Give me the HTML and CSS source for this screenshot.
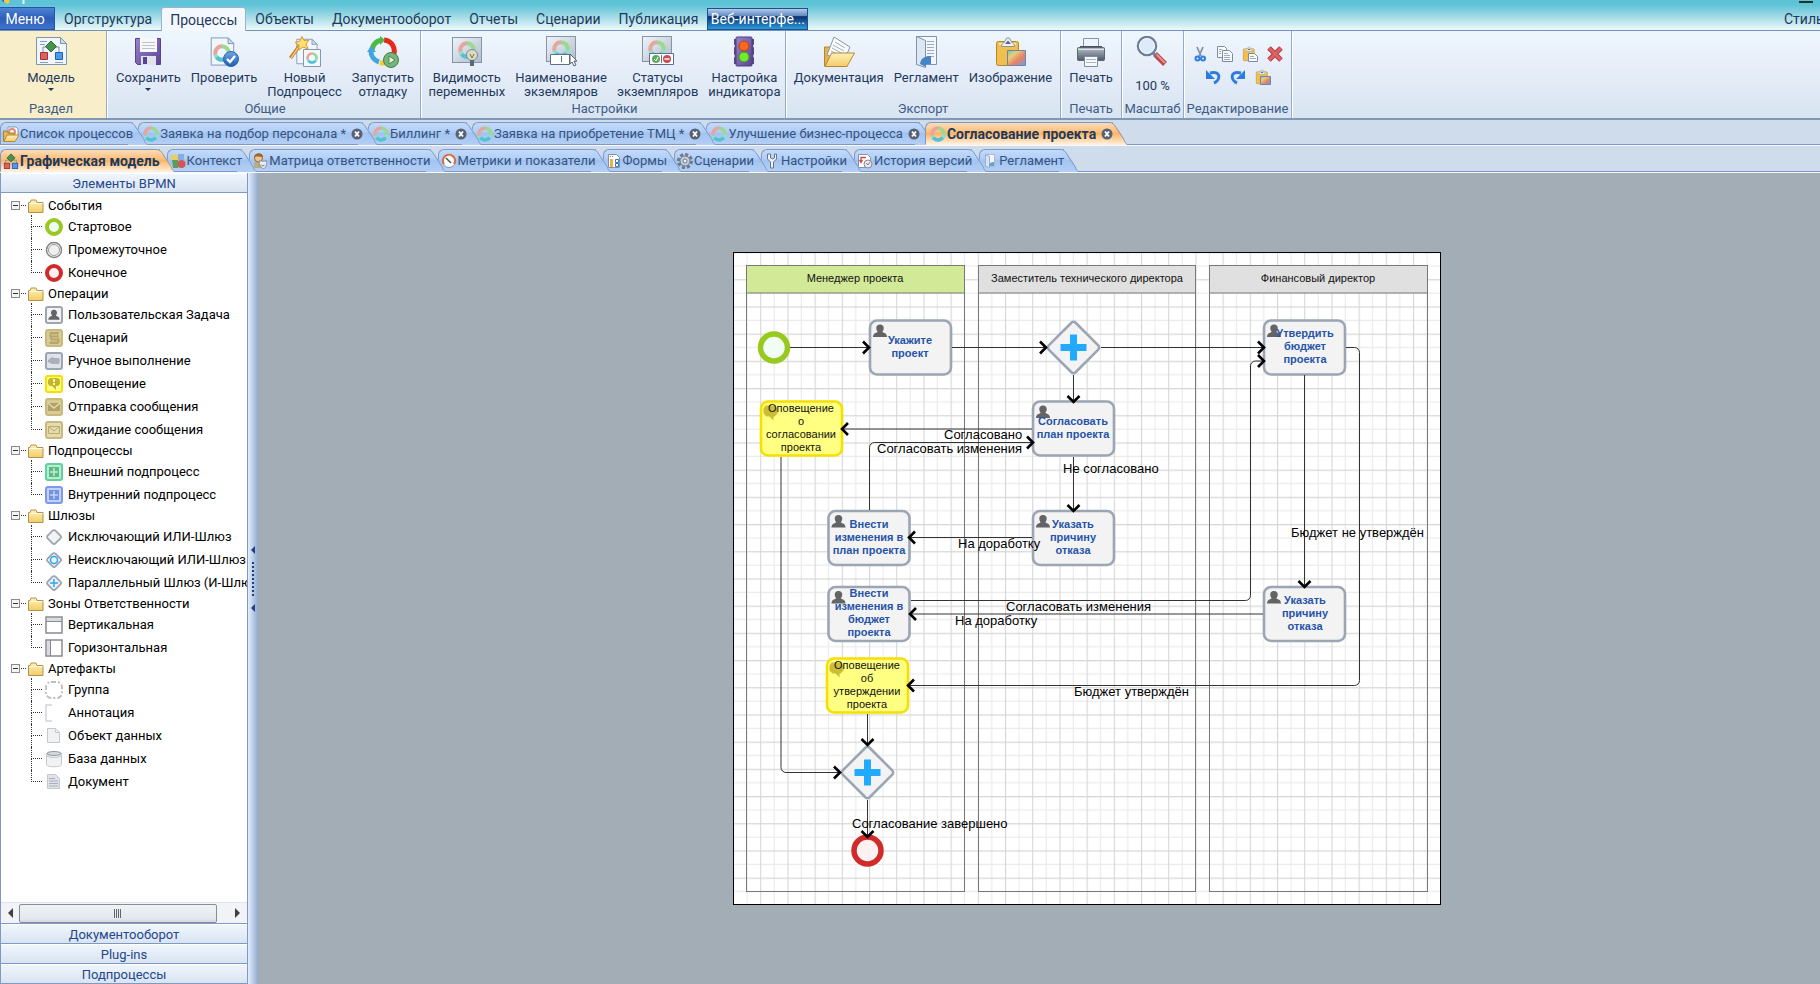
FILE: index.html
```html
<!DOCTYPE html>
<html lang="ru">
<head>
    <meta charset="UTF-8">
    <meta name="viewport" content="width=device-width, initial-scale=1.0">
    <title>Согласование проекта</title>
    <link rel="stylesheet" href="styles.css">
</head>
<body>

<!-- shared shapes -->
<svg class="defs" aria-hidden="true">
    <defs>
        <linearGradient id="tabBlue" x1="0" y1="0" x2="0" y2="1">
            <stop offset="0" stop-color="#c3dafb"/><stop offset=".4" stop-color="#b2cff7"/>
            <stop offset=".5" stop-color="#a3c3f0"/><stop offset="1" stop-color="#b4cff5"/>
        </linearGradient>
        <linearGradient id="tabOrange" x1="0" y1="0" x2="0" y2="1">
            <stop offset="0" stop-color="#fcdcb8"/><stop offset=".4" stop-color="#fbc180"/>
            <stop offset=".5" stop-color="#fbb565"/><stop offset="1" stop-color="#fff0de"/>
        </linearGradient>
        <linearGradient id="folderFill" x1="0" y1="0" x2="0" y2="1">
            <stop offset="0" stop-color="#fff0b8"/><stop offset="1" stop-color="#f2cd67"/>
        </linearGradient>
        <linearGradient id="boardFill" x1="0" y1="0" x2="1" y2="1">
            <stop offset="0" stop-color="#f0f4f8"/><stop offset="1" stop-color="#afbccb"/>
        </linearGradient>
        <linearGradient id="rainbow" x1="0" y1="0" x2="1" y2="1">
            <stop offset="0" stop-color="#78c796"/><stop offset=".3" stop-color="#e5cf7d"/>
            <stop offset=".6" stop-color="#e98263"/><stop offset="1" stop-color="#6da1dc"/>
        </linearGradient>
        <linearGradient id="purple" x1="0" y1="0" x2="1" y2="1">
            <stop offset="0" stop-color="#9a83cb"/><stop offset="1" stop-color="#5b4495"/>
        </linearGradient>
        <linearGradient id="blueBall" x1="0" y1="0" x2="0" y2="1">
            <stop offset="0" stop-color="#6aa6e6"/><stop offset="1" stop-color="#1f5eb0"/>
        </linearGradient>
        <linearGradient id="printerFill" x1="0" y1="0" x2="0" y2="1">
            <stop offset="0" stop-color="#b7bfca"/><stop offset="1" stop-color="#4e5969"/>
        </linearGradient>

        <symbol id="edge" viewBox="0 0 20 23">
            <path stroke="none" d="M0 0h1c4 0 6 2 8 5l8 13c1 3 2 5 3 5H0z"/>
            <path fill="none" stroke="#7f99c4" d="M0 .5h1c4 0 5 2 7 5l8 12c1 3 2 5 4 5"/>
        </symbol>
        <symbol id="ring" viewBox="0 0 16 16">
            <g fill="none" stroke-width="3.6">
                <path stroke="#8fdcd0" d="M14 7.500A6 6 0 0 1 2.200 9.500"/>
                <path stroke="#56c0d6" d="M12.700 11.700A6 6 0 0 1 3.300 11.700"/>
                <path stroke="#e5a6a0" d="M2.200 9.500A6 6 0 0 1 8 2"/>
                <path stroke="#9bd98f" d="M8 2A6 6 0 0 1 14 8.500"/>
            </g>
        </symbol>
        <symbol id="close" viewBox="0 0 12 12">
            <circle cx="6" cy="6" r="5.500" fill="#566174"/>
            <path d="M4 3.500l4 5M8 3.500l-4 5" stroke="#fff" stroke-width="1.800"/>
        </symbol>
        <symbol id="folder" viewBox="0 0 16 14">
            <path d="M1 3.500h1l1-2.500h5l1 2.500h6v10H.5v-10z" fill="url(#folderFill)" stroke="#b3924f"/>
            <path d="M1.500 4.500h13" stroke="#fffbe4"/>
        </symbol>
        <symbol id="docSheet" viewBox="0 0 32 32">
            <path d="M4.500 1.500h18l6 6v23h-24z" fill="#f2f6fb" stroke="#7b95b8"/>
            <path d="M22.500 1.500v6h6z" fill="#cfdcec" stroke="#7b95b8"/>
        </symbol>
        <symbol id="board" viewBox="0 0 32 32">
            <rect x="1.500" y="1.500" width="29" height="25" fill="url(#boardFill)" stroke="#8494a9"/>
            <use href="#ring" x="7" y="5" width="18" height="18"/>
        </symbol>
        <symbol id="clipboard" viewBox="0 0 32 32">
            <rect x="2.500" y="5.500" width="22" height="24" rx="2" fill="#f0bf4e" stroke="#b4852a"/>
            <path d="M5 8h17" stroke="#fbe2a0" stroke-width="2"/>
            <path d="M7.500 10.500c0-3 2-3 3-4.500l2-4h3l2 4c1 1.500 3 1.500 3 4.500z" fill="#eef1f5" stroke="#8a94a3"/>
            <path d="M11 8h6l-3-3.500z" fill="#59697f"/>
        </symbol>
        <symbol id="modelShapes" viewBox="0 0 18 18">
            <path d="M9 5v4M3 12V8h12v4" fill="none" stroke="#7592b5"/>
            <path d="M9 1l4.500 4.500L9 10 4.500 5.500z" fill="#48934c" stroke="#2c6b32"/>
            <rect x="1.500" y="11.500" width="6" height="6" fill="#dc6360" stroke="#a33536"/>
            <rect x="10.500" y="11.500" width="6" height="6" fill="#4b9af0" stroke="#2060b0"/>
        </symbol>
        <symbol id="man" viewBox="0 0 16 14">
            <path d="M8 .5c3 0 4 2 4 4 0 1.500-1 3-1.500 4 2 1 5 1.500 5 5.500H.5C.5 10 3.500 9.500 5.500 8.500 5 7.500 4 6 4 4.500c0-2 1-4 4-4z" fill="#636466"/>
        </symbol>
        <symbol id="rombus" viewBox="0 0 18 18">
            <rect x="3.500" y="3.500" width="11" height="11" rx="2" transform="rotate(45 9 9)" fill="#f2f2f2" stroke="#9aa4b2" stroke-width="1.800"/>
        </symbol>
    </defs>
</svg>

<header class="menu-bar">
    <svg class="title-rest" width="30" height="5" viewBox="0 0 30 5"><path d="M3 0h6l1 2-3 2-2-2H3z" fill="#f7c83c"/><path d="M2 0h2v2H3z" fill="#2b66b8"/><path d="M23.500 0v4" stroke="#e8f6f9" stroke-width="2"/></svg>
    <span class="minimize"></span>
    <button class="menu-main">Меню</button>
    <nav class="menu-tabs">
        <button class="menu-tab">Оргструктура</button>
        <button class="menu-tab active">Процессы</button>
        <button class="menu-tab">Объекты</button>
        <button class="menu-tab">Документооборот</button>
        <button class="menu-tab">Отчеты</button>
        <button class="menu-tab">Сценарии</button>
        <button class="menu-tab">Публикация</button>
    </nav>
    <button class="menu-web">Веб-интерфе...</button>
    <button class="menu-style">Стиль</button>
</header>

<section class="ribbon">
    <div class="group group-section">
        <div class="group-body">
            <button class="tool">
                <svg class="icon" viewBox="0 0 32 32"><path d="M1.500 1.500h24l6 6v21h-30z" fill="#f2f6fb" stroke="#7b95b8"/><path d="M25.500 1.500v6h6z" fill="#cfdcec" stroke="#7b95b8"/><path d="M5 5.500h7M5 8.500h5M5 26.500h8M20 26.500h8" stroke="#7fa0c8"/><path d="M8 16v-5h16v5" fill="none" stroke="#7592b5"/><path d="M16 5l5.500 5.500L16 16l-5.500-5.500z" fill="#48934c" stroke="#2c6b32"/><path d="M5.500 16.500h7v7h-7z" fill="#dc6360" stroke="#a33536"/><path d="M20.500 16.500h7v7h-7z" fill="#4b9af0" stroke="#2060b0"/></svg>
                Модель
                <span class="drop"></span>
            </button>
        </div>
        <div class="caption">Раздел</div>
    </div>
    <div class="group group-common">
        <div class="group-body">
            <button class="tool">
                <svg class="icon" viewBox="0 0 32 32"><path d="M3.500 2.500h25v26h-23l-2-2z" fill="url(#purple)" stroke="#58438c"/><path d="M8 2h17v14H8z" fill="#f7f8fa"/><path d="M10 6.500h13M10 9.500h13M10 12.500h13" stroke="#bcc3cc"/><path d="M9 20h15v9H9z" fill="#dfe3ea"/><path d="M11 21h4v7h-4z" fill="#58438c"/></svg>
                Сохранить
                <span class="drop"></span>
            </button>
            <button class="tool">
                <svg class="icon" viewBox="0 0 32 32"><use href="#docSheet" x="-1" width="30" height="31"/><use href="#ring" x="5" y="8" width="18" height="18"/><circle cx="23" cy="23" r="7.500" fill="url(#blueBall)" stroke="#2c66ae"/><path d="M19 23l3 3 5-6" fill="none" stroke="#fff" stroke-width="2.400"/></svg>
                Проверить
            </button>
            <button class="tool">
                <svg class="icon" viewBox="0 0 32 32"><use href="#docSheet" x="4" y="0" width="27" height="31"/><path d="M14.500 13.500h17v17h-17z" fill="#f4f7fb" stroke="#8398b3"/><use href="#ring" x="17" y="16" width="12" height="12"/><path d="M11 9L1.500 22" stroke="#b8751f" stroke-width="3.500"/><path d="M11 9L2 22" stroke="#f3c980" stroke-width="1.500"/><path d="M13 .5l2 4 5-.5-3 4 2 5-5-2-4 3V9L6 6.500l5-1.500z" fill="#ffe070" stroke="#dc992b"/></svg>
                Новый<br>Подпроцесс
            </button>
            <button class="tool">
                <svg class="icon" viewBox="0 0 32 32"><g fill="none" stroke-width="5"><path d="M5 14A11 11 0 0 1 15 4" stroke="#4fb848"/><path d="M17 4A11 11 0 0 1 26 20" stroke="#e62a1c"/><path d="M4 15a11 11 0 0 0 8 11" stroke="#42a5dc"/><path d="M13 27h7" stroke="#f3cc2d"/></g><path d="M13 0l5 4-5 5z" fill="#4fb848"/><path d="M0 16l4-6 5 6z" fill="#42a5dc"/><circle cx="24" cy="24" r="7.500" fill="#78b57b" stroke="#3f8148"/><path d="M22 20l6 4-6 4z" fill="#e6f2e5" stroke="#4e8b54"/></svg>
                Запустить<br>отладку
            </button>
        </div>
        <div class="caption">Общие</div>
    </div>
    <div class="group group-settings">
        <div class="group-body">
            <button class="tool">
                <svg class="icon" viewBox="0 0 32 32"><use href="#board"/><circle cx="21" cy="19" r="5.500" fill="#d9dcc0" stroke="#7e8899"/><path d="M19 18l2 4 2-4" fill="none" stroke="#6d7556"/><path d="M19 24h4v6h-4z" fill="#5b677a"/></svg>
                Видимость<br>переменных
            </button>
            <button class="tool">
                <svg class="icon" viewBox="0 0 32 32"><use href="#board" y="-1"/><path d="M5.500 18.500h19v10h-19z" fill="#fff" stroke="#5f6f86"/><path d="M16.500 20v6" stroke="#5f6f86"/><path d="M25 18v10l2-2 2 4 2-1-2-4h3z" fill="#fff" stroke="#56647a"/></svg>
                Наименование<br>экземляров
            </button>
            <button class="tool">
                <svg class="icon" viewBox="0 0 32 32"><use href="#board" y="-1" x="-1"/><path d="M7.500 17.500h24v11h-24z" fill="#fff" stroke="#5f6f86"/><path d="M19.500 19v8" stroke="#5f6f86"/><circle cx="14" cy="23" r="4" fill="#5fa765"/><path d="M12 23l2 2 2-4" fill="none" stroke="#fff"/><circle cx="25" cy="23" r="4" fill="#cc4a52"/><path d="M22.500 23h5" stroke="#fff" stroke-width="1.500"/></svg>
                Статусы<br>экземпляров
            </button>
            <button class="tool">
                <svg class="icon" viewBox="0 0 32 32"><path d="M6 3h20v5l-1 2 1 2v6l-1 2 1 2v6H6v-6l1-2-1-2v-6l1-2-1-2z" fill="#5c4590"/><rect x="8" y="1" width="16" height="29" rx="1" fill="url(#purple)" stroke="#51407e"/><circle cx="16" cy="10" r="5" fill="#f9681d" stroke="#b9430b"/><circle cx="16" cy="21" r="5" fill="#73ea2d" stroke="#419d1a"/></svg>
                Настройка<br>индикатора
            </button>
        </div>
        <div class="caption">Настройки</div>
    </div>
    <div class="group group-export">
        <div class="group-body">
            <button class="tool">
                <svg class="icon" viewBox="0 0 32 32"><path d="M1.500 30V11h8v3h15v16z" fill="#e4b450" stroke="#b18431"/><path d="M4 19L11 1l16 10-6 14z" fill="#fafbfc" stroke="#8a97a9"/><path d="M12 6l10 6M10 9l11 6M9 12l11 6M8 15l8 4" stroke="#a3afbe"/><path d="M2 30.500L8.500 17h23L24 30.500z" fill="url(#folderFill)" stroke="#b48a35"/></svg>
                Документация
            </button>
            <button class="tool">
                <svg class="icon" viewBox="0 0 32 32"><path d="M6.500.5h20v28h-20z" fill="#f3f6fa" stroke="#7d93b1"/><path d="M17 5.500h7M17 8.500h7M17 11.500h7M17 14.500h7M17 17.500h7M17 20.500h7" stroke="#9baabd"/><path d="M6.500.5l9 4v27l-9-3z" fill="#dde6f1" stroke="#7d93b1"/><path d="M10 28c1-7 6-8 11-8v8h-5v3z" fill="#4784c6"/></svg>
                Регламент
            </button>
            <button class="tool">
                <svg class="icon" viewBox="0 0 32 32"><use href="#clipboard" x="-1"/><path d="M12.500 14.500h18v15h-18z" fill="url(#rainbow)" stroke="#6e86a5"/></svg>
                Изображение
            </button>
        </div>
        <div class="caption">Экспорт</div>
    </div>
    <div class="group group-print">
        <div class="group-body">
            <button class="tool">
                <svg class="icon" viewBox="0 0 32 32"><path d="M8.500 2.500h15v9h-15z" fill="#eef4fb" stroke="#8295ad"/><path d="M5 10h22v4H5z" fill="#475161"/><rect x="2.500" y="11.500" width="27" height="13" rx="1" fill="url(#printerFill)" stroke="#5a6575"/><path d="M3 13.500h26" stroke="#e1e5eb"/><path d="M4 14h1v2H4z" fill="#6fd23c"/><path d="M9.500 20.500h13v10h-13z" fill="#f6f8fb" stroke="#7c8da5"/><path d="M11 23.500h10M11 26.500h10" stroke="#a9b5c5"/></svg>
                Печать
            </button>
        </div>
        <div class="caption">Печать</div>
    </div>
    <div class="group group-zoom">
        <div class="group-body">
            <button class="tool">
                <svg class="icon" viewBox="0 0 32 32"><path d="M19 18l10 10" stroke="#b44a4b" stroke-width="5.500"/><path d="M20 18l9 9" stroke="#e99291" stroke-width="2"/><path d="M16 16l4 4" stroke="#717e90" stroke-width="3"/><circle cx="11" cy="10" r="9" fill="#dcebfa" stroke="#6f7f95" stroke-width="2.500"/><circle cx="11" cy="10" r="7.500" fill="none" stroke="#f7fafd"/></svg>
                <span class="zoom-value">100 %</span>
            </button>
        </div>
        <div class="caption">Масштаб</div>
    </div>
    <div class="group group-edit">
        <div class="edit-tools">
            <button class="mini" aria-label="Вырезать"><svg viewBox="0 0 16 16"><path d="M5 1l4 9M11 1l-4 9" stroke="#8592a6" stroke-width="1.800"/><g fill="none" stroke="#2e7fdf" stroke-width="2"><circle cx="5.500" cy="12.500" r="2"/><circle cx="11" cy="12.500" r="2"/></g></svg></button>
            <button class="mini" aria-label="Копировать"><svg viewBox="0 0 16 16"><g fill="#f7f9fb" stroke="#7b8da6"><path d="M.5.5h7l2 2v9h-9z"/><path d="M5.500 4.500h7l3 3v8h-10z"/></g><path d="M2 3.500h3M2 5.500h2M2 7.500h2M7 7.500h4M7 9.500h6M7 11.500h6M7 13.500h6" stroke="#9fadbf"/></svg></button>
            <button class="mini" aria-label="Вставить"><svg viewBox="0 0 16 16"><use href="#clipboard" width="16" height="16"/><path d="M6.500 7.500h6l3 3v5h-9z" fill="#f7f9fb" stroke="#7b8da6"/><path d="M8 10.500h4M8 12.500h6" stroke="#9fadbf"/></svg></button>
            <button class="mini" aria-label="Удалить"><svg viewBox="0 0 16 16"><path d="M2 2l12 12M14 2L2 14" stroke="#b33b3e" stroke-width="5"/><path d="M2 2l12 12M14 2L2 14" stroke="#dd6263" stroke-width="3"/></svg></button>
            <button class="mini" aria-label="Отменить"><svg viewBox="0 0 16 16"><path d="M5 4c11-3 11 7 4 10" fill="none" stroke="#2c7ce0" stroke-width="3"/><path d="M1 1v9h9z" fill="#2c7ce0"/></svg></button>
            <button class="mini" aria-label="Вернуть"><svg viewBox="0 0 16 16"><path d="M11 4C0 1 0 11 7 14" fill="none" stroke="#2c7ce0" stroke-width="3"/><path d="M15 1v9H6z" fill="#2c7ce0"/></svg></button>
            <button class="mini" aria-label="Вставить изображение"><svg viewBox="0 0 16 16"><use href="#clipboard" width="16" height="16"/><path d="M5.500 7.500h10v8h-10z" fill="url(#rainbow)" stroke="#6e86a5"/></svg></button>
        </div>
        <div class="caption">Редактирование</div>
    </div>
</section>

<nav class="tabs">
    <div class="tab">
        <svg class="tab-icon" viewBox="0 0 16 16"><path d="M5 1h8l2 2v8H5z" fill="#fff" stroke="#8b9ab0"/><circle cx="9" cy="6" r="3" fill="none" stroke="#e08a7a" stroke-width="2"/><path d="M.5 15V5H4l1 2h6v8z" fill="#e5b754" stroke="#a97e31"/><path d="M1 15.500L4 9h12l-4 6.500z" fill="url(#folderFill)" stroke="#b48a35"/></svg>
        <a href="#">Список процессов</a>
        <svg class="tab-edge"><use href="#edge"/></svg>
    </div>
    <div class="tab process">
        <svg class="tab-icon"><use href="#ring"/></svg>
        <a href="#">Заявка на подбор персонала *</a>
        <button class="tab-close" aria-label="Закрыть"><svg><use href="#close"/></svg></button>
        <svg class="tab-edge"><use href="#edge"/></svg>
    </div>
    <div class="tab process">
        <svg class="tab-icon"><use href="#ring"/></svg>
        <a href="#">Биллинг *</a>
        <button class="tab-close" aria-label="Закрыть"><svg><use href="#close"/></svg></button>
        <svg class="tab-edge"><use href="#edge"/></svg>
    </div>
    <div class="tab process">
        <svg class="tab-icon"><use href="#ring"/></svg>
        <a href="#">Заявка на приобретение ТМЦ *</a>
        <button class="tab-close" aria-label="Закрыть"><svg><use href="#close"/></svg></button>
        <svg class="tab-edge"><use href="#edge"/></svg>
    </div>
    <div class="tab process">
        <svg class="tab-icon"><use href="#ring"/></svg>
        <a href="#">Улучшение бизнес-процесса</a>
        <button class="tab-close" aria-label="Закрыть"><svg><use href="#close"/></svg></button>
        <svg class="tab-edge"><use href="#edge"/></svg>
    </div>
    <div class="tab process active">
        <svg class="tab-icon"><use href="#ring"/></svg>
        <a href="#">Согласование проекта</a>
        <button class="tab-close" aria-label="Закрыть"><svg><use href="#close"/></svg></button>
        <svg class="tab-edge"><use href="#edge"/></svg>
    </div>
</nav>

<nav class="tabs views">
    <div class="tab active">
        <svg class="tab-icon"><use href="#modelShapes"/></svg>
        <a href="#">Графическая модель</a>
        <svg class="tab-edge"><use href="#edge"/></svg>
    </div>
    <div class="tab">
        <svg class="tab-icon" viewBox="0 0 16 16"><path d="M1 2h3l1-1 1 1h3v5H1z" fill="#e9cf63"/><path d="M8 1h6v6H8z" fill="#86aede"/><path d="M2 7h6v3l1 1-1 4H3z" fill="#5e9c5c"/><circle cx="11.500" cy="11" r="4" fill="#d2575a"/></svg>
        <a href="#">Контекст</a>
        <svg class="tab-edge"><use href="#edge"/></svg>
    </div>
    <div class="tab">
        <svg class="tab-icon" viewBox="0 0 16 16"><path d="M2 15V9h9v6z" fill="#b8ad82"/><circle cx="6.500" cy="5" r="4" fill="#f2c690" stroke="#96682e"/><path d="M2 4c1-5 9-5 9 0-3 0-5-1-9 0z" fill="#96682e"/><path d="M7.500 7.500c3 1 5 1 7 0 1 4-1 8-3 8s-5-4-4-8z" fill="#e9eef4" stroke="#8391a4"/><path d="M9.500 12c1 1 2 1 3 0" stroke="#5d6c80" fill="none"/></svg>
        <a href="#">Матрица ответственности</a>
        <svg class="tab-edge"><use href="#edge"/></svg>
    </div>
    <div class="tab">
        <svg class="tab-icon" viewBox="0 0 16 16"><circle cx="8" cy="8" r="6.500" fill="#fbfbfb" stroke="#8c95a3"/><path d="M3 11A6 6 0 1 1 13 11" fill="none" stroke="#dc6a3a" stroke-width="2"/><path d="M5 5l5 5" stroke="#4b5563" stroke-width="1.500"/></svg>
        <a href="#">Метрики и показатели</a>
        <svg class="tab-edge"><use href="#edge"/></svg>
    </div>
    <div class="tab">
        <svg class="tab-icon" viewBox="0 0 16 16"><path d="M2.500 1.500h8l3 3v10h-11z" fill="#fff" stroke="#8091a8"/><path d="M4 3.500h4" stroke="#d4605c" stroke-dasharray="1 1"/><path d="M4 6h3v8H4z" fill="#f0b23c"/><path d="M9.500 6.500h3v3h-3zM9.500 10.500h3v3h-3z" fill="#fff" stroke="#2f79cf"/></svg>
        <a href="#">Формы</a>
        <svg class="tab-edge"><use href="#edge"/></svg>
    </div>
    <div class="tab">
        <svg class="tab-icon" viewBox="0 0 16 16"><circle cx="8" cy="8" r="6.500" fill="none" stroke="#6c7a8e" stroke-width="3" stroke-dasharray="3 2"/><circle cx="8" cy="8" r="5" fill="#c5cdd8" stroke="#6c7a8e"/><circle cx="8" cy="8" r="2" fill="#eef2f7" stroke="#6c7a8e"/></svg>
        <a href="#">Сценарии</a>
        <svg class="tab-edge"><use href="#edge"/></svg>
    </div>
    <div class="tab">
        <svg class="tab-icon" viewBox="0 0 16 16"><path d="M3.500 1v5l3 3v6h3V9l3-3V1h-2v4l-2 1-2-1V1z" fill="#edf1f6" stroke="#66768e"/></svg>
        <a href="#">Настройки</a>
        <svg class="tab-edge"><use href="#edge"/></svg>
    </div>
    <div class="tab">
        <svg class="tab-icon" viewBox="0 0 16 16"><path d="M1.500 1.500h9l3 3v10h-12z" fill="#fff" stroke="#8091a8"/><path d="M4 9V4.500h5M2.500 7L4 9.500 5.500 7" fill="none" stroke="#d34949" stroke-width="1.300"/><circle cx="11" cy="11" r="4" fill="#e6ebf1" stroke="#7f8c9e"/><path d="M9 10l2 2 2-3" fill="none" stroke="#c46a64"/></svg>
        <a href="#">История версий</a>
        <svg class="tab-edge"><use href="#edge"/></svg>
    </div>
    <div class="tab">
        <svg class="tab-icon" viewBox="0 0 16 16"><path d="M3.500 1.500h9v12h-9z" fill="#f4f7fa" stroke="#a9bad0"/><path d="M3.500 1.500l4 2v11l-4-1z" fill="#d9e4f0" stroke="#9db1ca"/><path d="M7 13c0-3 2-4 5-4v4z" fill="#6ea0d8"/></svg>
        <a href="#">Регламент</a>
        <svg class="tab-edge"><use href="#edge"/></svg>
    </div>
</nav>

<main class="work">
    <aside class="sidebar">
        <button class="panel-head">Элементы BPMN</button>
        <div class="tree">
            <div class="branch">
                <div class="branch-head"><span class="toggle"></span><svg class="folder"><use href="#folder"/></svg>События</div>
                <ul>
                    <li><svg viewBox="0 0 18 18"><circle cx="9" cy="9" r="7" fill="#f0fbf2" stroke="#97c91e" stroke-width="4"/></svg>Стартовое</li>
                    <li><svg viewBox="0 0 18 18"><circle cx="9" cy="9" r="7.500" fill="#fff" stroke="#838383" stroke-width="1.500"/><circle cx="9" cy="9" r="5.500" fill="#f0f0f0" stroke="#9a9a9a"/></svg>Промежуточное</li>
                    <li><svg viewBox="0 0 18 18"><circle cx="9" cy="9" r="7" fill="#fdf0f0" stroke="#cf2b2b" stroke-width="4"/></svg>Конечное</li>
                </ul>
            </div>
            <div class="branch">
                <div class="branch-head"><span class="toggle"></span><svg class="folder"><use href="#folder"/></svg>Операции</div>
                <ul>
                    <li><svg viewBox="0 0 18 18"><rect x="1" y="1" width="16" height="16" rx="2" fill="#f3f3f3" stroke="#9ba5b4" stroke-width="2"/><use href="#man" x="3" y="3" width="12" height="11"/></svg>Пользовательская Задача</li>
                    <li><svg viewBox="0 0 18 18"><rect x="1" y="1" width="16" height="16" rx="2" fill="#d8cb95" stroke="#c8b97c" stroke-width="2"/><path d="M5 3h9l-1 3 2 6-2 3H4l2-4-2-4z" fill="#b5a76c"/><path d="M6 6h6M7 9h6M6 12h6" stroke="#d8cb95"/></svg>Сценарий</li>
                    <li><svg viewBox="0 0 18 18"><rect x="1" y="1" width="16" height="16" rx="2" fill="#dfe2e8" stroke="#9ba5b4" stroke-width="2"/><path d="M3 8l4-3 2 1h5l1 2-1 4H7l-4-2z" fill="#aab1bc"/></svg>Ручное выполнение</li>
                    <li><svg viewBox="0 0 18 18"><rect x="1" y="1" width="16" height="16" rx="2" fill="#ffff82" stroke="#f5e000" stroke-width="2"/><path d="M5 3h8l2 2v4l-2 2h-2v4l-4-4H5L3 9V5z" fill="#c2b435"/><path d="M9 4v3M9 8v2" stroke="#ffff82" stroke-width="2"/></svg>Оповещение</li>
                    <li><svg viewBox="0 0 18 18"><rect x="1" y="1" width="16" height="16" rx="2" fill="#d8cb95" stroke="#c8b97c" stroke-width="2"/><path d="M3 5h12v8H3z" fill="#b1a267"/><path d="M3 5l6 5 6-5" fill="none" stroke="#e5daad" stroke-width="1.500"/></svg>Отправка сообщения</li>
                    <li><svg viewBox="0 0 18 18"><rect x="1" y="1" width="16" height="16" rx="2" fill="#e5dbad" stroke="#c8b97c" stroke-width="2"/><path d="M3.500 5.500h11v7h-11zM4 6l5 4 5-4" fill="none" stroke="#b9aa70"/></svg>Ожидание сообщения</li>
                </ul>
            </div>
            <div class="branch">
                <div class="branch-head"><span class="toggle"></span><svg class="folder"><use href="#folder"/></svg>Подпроцессы</div>
                <ul>
                    <li><svg viewBox="0 0 18 18"><rect x="1" y="1" width="16" height="16" rx="2" fill="#b7efcd" stroke="#62cfa0" stroke-width="2"/><path d="M4 4h10v10H4z" fill="#5fb98b"/><path d="M9 5v8M5 9h8" stroke="#b7efcd" stroke-width="1.500"/></svg>Внешний подпроцесс</li>
                    <li><svg viewBox="0 0 18 18"><rect x="1" y="1" width="16" height="16" rx="2" fill="#c3d2fb" stroke="#7b9aec" stroke-width="2"/><path d="M4 4h10v10H4z" fill="#7292e0"/><path d="M9 5v8M5 9h8" stroke="#c3d2fb" stroke-width="1.500"/></svg>Внутренний подпроцесс</li>
                </ul>
            </div>
            <div class="branch">
                <div class="branch-head"><span class="toggle"></span><svg class="folder"><use href="#folder"/></svg>Шлюзы</div>
                <ul>
                    <li><svg viewBox="0 0 18 18"><use href="#rombus"/></svg>Исключающий ИЛИ-Шлюз</li>
                    <li><svg viewBox="0 0 18 18"><use href="#rombus"/><circle cx="9" cy="9" r="3.500" fill="none" stroke="#22aaff" stroke-width="1.500"/></svg>Неисключающий ИЛИ-Шлюз</li>
                    <li><svg viewBox="0 0 18 18"><use href="#rombus"/><path d="M9 5v8M5 9h8" stroke="#22aaff" stroke-width="1.500"/></svg>Параллельный Шлюз (И-Шлюз)</li>
                </ul>
            </div>
            <div class="branch">
                <div class="branch-head"><span class="toggle"></span><svg class="folder"><use href="#folder"/></svg>Зоны Ответственности</div>
                <ul>
                    <li><svg viewBox="0 0 18 18"><path d="M1 1h16v16H1z" fill="#fff" stroke="#8a8b90" stroke-width="1.500"/><path d="M2 2h14v3H2z" fill="#d8dbe3"/><path d="M1 5.500h16" stroke="#8a8b90"/></svg>Вертикальная</li>
                    <li><svg viewBox="0 0 18 18"><path d="M1 1h16v16H1z" fill="#fff" stroke="#8a8b90" stroke-width="1.500"/><path d="M2 2h3v14H2z" fill="#d8dbe3"/><path d="M5.500 1v16" stroke="#8a8b90"/></svg>Горизонтальная</li>
                </ul>
            </div>
            <div class="branch">
                <div class="branch-head"><span class="toggle"></span><svg class="folder"><use href="#folder"/></svg>Артефакты</div>
                <ul>
                    <li><svg viewBox="0 0 18 18"><rect x="1" y="1" width="16" height="16" rx="5" fill="none" stroke="#bdbdbd" stroke-width="1.800" stroke-dasharray="5 2 2 2"/></svg>Группа</li>
                    <li><svg viewBox="0 0 18 18"><path d="M7 1H1v16h6" fill="none" stroke="#cfd3da" stroke-width="1.500"/></svg>Аннотация</li>
                    <li><svg viewBox="0 0 18 18"><path d="M2.500 1.500h8l4 4v10h-12z" fill="#f1f2f4" stroke="#c3c8d0"/><path d="M10.500 1.500v4h4" fill="none" stroke="#c3c8d0"/></svg>Объект данных</li>
                    <li><svg viewBox="0 0 18 18"><path d="M1.500 3.500h15v11c0 3-15 3-15 0z" fill="#f1f2f4" stroke="#c3c8d0"/><ellipse cx="9" cy="3.500" rx="7" ry="2" fill="#d6d9de" stroke="#8f959e"/><path d="M2 6c3 2 11 2 14 0" fill="none" stroke="#c3c8d0"/></svg>База данных</li>
                    <li><svg viewBox="0 0 18 18"><path d="M2.500 1.500h8l4 4v10h-12z" fill="#dfe2e7" stroke="#c3c8d0"/><path d="M4 5.500h6M4 8h9M4 10.500h9M4 13h9" stroke="#a9afb9"/></svg>Документ</li>
                </ul>
            </div>
        </div>
        <div class="scrollbar">
            <span class="arrow arrow-left"></span>
            <span class="thumb"></span>
            <span class="arrow arrow-right"></span>
        </div>
        <button class="panel-head">Документооборот</button>
        <button class="panel-head">Plug-ins</button>
        <button class="panel-head">Подпроцессы</button>
    </aside>

    <div class="splitter">
        <span class="split-arrow"></span>
        <span class="split-dots"></span>
        <span class="split-arrow"></span>
    </div>

    <div class="canvas">
        <svg class="diagram" width="708" height="653" viewBox="0 0 708 653">
            <defs>
                <pattern id="grid" x="0" y="0" width="27.200" height="27.200" patternUnits="userSpaceOnUse">
                    <path d="M14 0v27.200M0 14h27.200" stroke="#ebebeb" stroke-width="1.200"/>
                    <path d="M.5 0v27.200M0 .5h27.200" stroke="#d6d6d6" stroke-width="1.200"/>
                </pattern>
                <marker id="head" viewBox="-9 -8 11 16" refX="0" refY="0" markerWidth="11" markerHeight="16" markerUnits="userSpaceOnUse" orient="auto">
                    <path d="M-7 -6L-1 0L-7 6" fill="none" stroke="#000" stroke-width="2.600"/>
                </marker>
                <g id="task">
                    <rect x="-40.500" y="-27" width="81" height="54" rx="7" fill="#f3f3f3" stroke="#9ba5b4" stroke-width="2.600"/>
                    <use href="#man" x="-38" y="-24" width="15" height="14"/>
                </g>
                <g id="notify">
                    <rect x="-40.500" y="-27" width="81" height="54" rx="7" fill="#ffff82" stroke="#f5e000" stroke-width="2.600"/>
                    <path d="M-36-23h9l3 3v5l-3 3h-1v4l-4-4h-3l-3-3v-5z" fill="#cbbd35"/>
                </g>
                <g id="gateway">
                    <rect x="-19" y="-19" width="38" height="38" rx="3" transform="rotate(45)" fill="#f3f3f3" stroke="#9ba5b4" stroke-width="2.600"/>
                    <path d="M0-13v26M-13 0h26" stroke="#22aaff" stroke-width="7"/>
                </g>
            </defs>

            <rect width="708" height="653" fill="#fff"/>
            <rect width="708" height="653" fill="url(#grid)"/>

            <!-- lanes -->
            <g class="lanes">
                <rect x="13.500" y="13.500" width="218" height="27.500" fill="#d2e998"/>
                <rect x="245.500" y="13.500" width="217" height="27.500" fill="#e0e0e0"/>
                <rect x="476.500" y="13.500" width="218" height="27.500" fill="#e0e0e0"/>
                <rect x="13.500" y="13.500" width="218" height="626" fill="none"/>
                <rect x="245.500" y="13.500" width="217" height="626" fill="none"/>
                <rect x="476.500" y="13.500" width="218" height="626" fill="none"/>
            </g>
            <g class="lane-title">
                <text x="122" y="30">Менеджер проекта</text>
                <text x="354" y="30">Заместитель технического директора</text>
                <text x="585" y="30">Финансовый директор</text>
            </g>

            <!-- events, tasks and gateways -->
            <circle cx="41" cy="95.500" r="13.500" fill="#f1fdf4" stroke="#97c91e" stroke-width="5.500"/>
            <circle cx="134.500" cy="598.500" r="13.500" fill="#fdf1f1" stroke="#cf2b2b" stroke-width="5.500"/>
            <use href="#task" x="177.500" y="95.500"/>
            <use href="#task" x="571.500" y="95.500"/>
            <use href="#task" x="340.500" y="176.500"/>
            <use href="#task" x="340.500" y="286"/>
            <use href="#task" x="136" y="286"/>
            <use href="#task" x="136" y="362"/>
            <use href="#task" x="571.500" y="362"/>
            <use href="#notify" x="68.500" y="176.500"/>
            <use href="#notify" x="134.500" y="433.500"/>
            <use href="#gateway" x="340.500" y="95.500"/>
            <use href="#gateway" x="134.500" y="520.500"/>

            <!-- flows -->
            <g class="flow">
                <path d="M57 95.500H137"/>
                <path d="M219 95.500H314"/>
                <path d="M368 95.500H532"/>
                <path d="M340.500 123V151"/>
                <path d="M299 177H108"/>
                <path d="M136.500 258V195.500a5 5 0 0 1 5-5H301"/>
                <path d="M340.500 205V260"/>
                <path d="M299 285.500H175"/>
                <path d="M571.500 123V336"/>
                <path d="M613 95.500h8.500a5 5 0 0 1 5 5V428.500a5 5 0 0 1-5 5H174"/>
                <path d="M530 362H176"/>
                <path d="M178 348.500H512.500a5 5 0 0 0 5-5V114a5 5 0 0 1 5-5H532"/>
                <path d="M48 205V515.500a5 5 0 0 0 5 5H108"/>
                <path d="M134.500 462V494"/>
                <path d="M134.500 548V586"/>
            </g>

            <g class="task-text">
                <text x="177" y="92">Укажите<tspan x="177" dy="13">проект</tspan></text>
                <text x="572" y="85">Утвердить<tspan x="572" dy="13">бюджет</tspan><tspan x="572" dy="13">проекта</tspan></text>
                <text x="340" y="173">Согласовать<tspan x="340" dy="13">план проекта</tspan></text>
                <text x="340" y="276">Указать<tspan x="340" dy="13">причину</tspan><tspan x="340" dy="13">отказа</tspan></text>
                <text x="136" y="276">Внести<tspan x="136" dy="13">изменения в</tspan><tspan x="136" dy="13">план проекта</tspan></text>
                <text x="136" y="345">Внести<tspan x="136" dy="13">изменения в</tspan><tspan x="136" dy="13">бюджет</tspan><tspan x="136" dy="13">проекта</tspan></text>
                <text x="572" y="352">Указать<tspan x="572" dy="13">причину</tspan><tspan x="572" dy="13">отказа</tspan></text>
            </g>
            <g class="lane-title">
                <text x="68" y="160">Оповещение<tspan x="68" dy="13">о</tspan><tspan x="68" dy="13">согласовании</tspan><tspan x="68" dy="13">проекта</tspan></text>
                <text x="134" y="417">Оповещение<tspan x="134" dy="13">об</tspan><tspan x="134" dy="13">утверждении</tspan><tspan x="134" dy="13">проекта</tspan></text>
            </g>
            <g class="flow-text">
                <text x="211" y="187">Согласовано</text>
                <text x="144" y="201">Согласовать изменения</text>
                <text x="330" y="221">Не согласовано</text>
                <text x="225" y="296">На доработку</text>
                <text x="558" y="285">Бюджет не утверждён</text>
                <text x="273" y="359">Согласовать изменения</text>
                <text x="222" y="373">На доработку</text>
                <text x="341" y="444">Бюджет утверждён</text>
                <text x="119" y="576">Согласование завершено</text>
            </g>
            <rect x=".5" y=".5" width="707" height="652" fill="none" stroke="#000"/>
        </svg>
    </div>
</main>

</body>
</html>
```

FILE: styles.css
```css
* {
    box-sizing: border-box;
}
body {
    margin: 0;
    height: 100vh;
    display: flex;
    flex-direction: column;
    overflow: hidden;
    font-family: Roboto, "Liberation Sans", sans-serif;
    font-size: 13px;
    color: #1e395b;
    background-color: #cfdcec;
}
button {
    font: inherit;
    color: inherit;
    border: none;
    background: none;
    padding: 0;
    white-space: nowrap;
    cursor: pointer;
}
a {
    color: inherit;
    text-decoration: none;
}
.defs {
    position: absolute;
    width: 0;
    height: 0;
}

/* top menu */
.menu-bar {
    position: relative;
    display: flex;
    align-items: flex-end;
    flex: none;
    height: 31px;
    font-size: 14px;
    border-bottom: 1px solid #6f93bb;
    background: linear-gradient(#5fc3d7 15%, #8fd4e1 45%, #eef8fa);
}
.title-rest {
    position: absolute;
    left: 0;
    top: 0;
}
.minimize {
    position: absolute;
    right: 7px;
    top: 1px;
    width: 14px;
    height: 2px;
    background: #26302c;
}
.menu-main {
    width: 55px;
    height: 23px;
    padding-right: 4px;
    color: #fff;
    border: 1px solid #2453a4;
    border-left: none;
    background: linear-gradient(#4c83d2, #2c5dba 50%, #3f74cb);
}
.menu-tabs {
    display: flex;
}
.menu-tab {
    height: 23px;
    padding: 0 8px;
    border: 1px solid transparent;
    border-bottom: none;
}
.menu-tab.active {
    height: 24px;
    margin-bottom: -1px;
    border-color: #9ab4d0;
    border-radius: 3px 3px 0 0;
    background: #f3f8fe;
}
.menu-web {
    height: 22px;
    width: 101px;
    color: #fff;
    border: 1px solid #1c4f92;
    background: linear-gradient(#b5cbe7, #5d88c0 35%, #0a2f6d 38%, #2c9bdc);
}
.menu-style {
    width: 36px;
    height: 23px;
    margin-left: auto;
    overflow: hidden;
    text-align: left;
}

/* ribbon */
.ribbon {
    display: flex;
    flex: none;
    height: 89px;
    border-bottom: 2px solid #7f98b5;
    background: linear-gradient(#eef6fd, #e7eef9 40%, #d8e4f1);
}
.group {
    display: flex;
    flex-direction: column;
    flex: none;
    border-right: 1px solid #93abc9;
    box-shadow: 1px 0 0 #fff;
}
.group-section {
    width: 107px;
    padding-right: 4px;
    background: #f8efca;
}
.group-common {
    width: 314px;
    padding-left: 3px;
}
.group-settings {
    width: 365px;
    padding-left: 3px;
}
.group-export {
    width: 275px;
}
.group-print {
    width: 61px;
}
.group-zoom {
    width: 62px;
}
.group-edit {
    width: 108px;
}
.group-body {
    flex: 1;
    display: flex;
    justify-content: center;
    align-items: flex-start;
    padding-top: 5px;
}
.tool {
    padding: 0 5px;
    line-height: 14px;
}
.icon {
    display: block;
    width: 32px;
    height: 32px;
    margin: 0 auto 3px;
}
.drop {
    display: block;
    width: 0;
    margin: 3px auto 0;
    border: 3px solid transparent;
    border-top-color: #1e395b;
    border-bottom: none;
}
.zoom-value {
    display: block;
    padding-top: 8px;
}
.caption {
    height: 17px;
    line-height: 16px;
    text-align: center;
    white-space: nowrap;
    color: #3e5c86;
}
.edit-tools {
    flex: 1;
    display: flex;
    flex-wrap: wrap;
    justify-content: center;
    align-content: flex-start;
    gap: 7px 9px;
    padding: 15px 2px 0;
}
.mini {
    width: 16px;
    height: 16px;
}
.mini svg {
    display: block;
    width: 16px;
    height: 16px;
}

/* document and view tabs */
.tabs {
    display: flex;
    align-items: flex-end;
    flex: none;
    height: 26px;
    border-bottom: 1px solid #f6f8fb;
    background: linear-gradient(#cfdcec 24px, #8099c4 24px);
}
.views {
    height: 27px;
    background: linear-gradient(#cfdcec 25px, #8099c4 25px);
}
.tab {
    position: relative;
    display: flex;
    align-items: center;
    height: 23px;
    padding-left: 3px;
    margin-right: -10px;
    color: #35537f;
    fill: url(#tabBlue);
    white-space: nowrap;
}
.views .tab {
    margin-right: -8px;
}
.tab::before {
    content: "";
    position: absolute;
    z-index: -1;
    inset: 0 15px 0 0;
    border: 1px solid #7f99c4;
    border-right: none;
    border-radius: 6px 0 0 0;
    background: linear-gradient(#c3dafb, #b2cff7 40%, #a3c3f0 50%, #b4cff5);
}
.tab:nth-child(1) { z-index: 9; }
.tab:nth-child(2) { z-index: 8; }
.tab:nth-child(3) { z-index: 7; }
.tab:nth-child(4) { z-index: 6; }
.tab:nth-child(5) { z-index: 5; }
.tab:nth-child(6) { z-index: 4; }
.tab:nth-child(7) { z-index: 3; }
.tab:nth-child(8) { z-index: 2; }
.tab:nth-child(9) { z-index: 1; }
.tab.active {
    z-index: 10;
    font-size: 14px;
    font-weight: bold;
    color: #1e395b;
    fill: url(#tabOrange);
}
.tab.active::before {
    border-bottom-color: #fff0de;
    background: linear-gradient(#fcdcb8, #fbc180 40%, #fbb565 50%, #fff0de);
}
.tab-icon {
    width: 16px;
    height: 16px;
    margin-right: 1px;
}
.process {
    padding-left: 5px;
}
.tab-close {
    width: 12px;
    height: 12px;
    margin-left: 5px;
}
.tab-close svg {
    display: block;
    width: 12px;
    height: 12px;
}
.tab-edge {
    position: relative;
    z-index: -1;
    width: 20px;
    height: 23px;
    margin-left: -5px;
}

/* work area */
.work {
    flex: 1;
    display: flex;
    min-height: 0;
}
.sidebar {
    flex: none;
    display: flex;
    flex-direction: column;
    width: 248px;
    border: 1px solid #8099c4;
    border-width: 0 1px;
    background: #fff;
}
.panel-head {
    flex: none;
    height: 20px;
    padding-top: 1px;
    color: #24468c;
    border-top: 1px solid #fff;
    border-bottom: 1px solid #8099c4;
    background: linear-gradient(#eff5fc, #d8e4f1);
}
.tree {
    flex: 1;
    overflow: hidden;
    padding-top: 3px;
    color: #000;
    white-space: nowrap;
}
.branch-head {
    display: flex;
    align-items: center;
    height: 19px;
    padding-left: 10px;
}
.toggle {
    position: relative;
    width: 9px;
    height: 9px;
    margin-right: 8px;
    border: 1px solid #8c8c8c;
    background: linear-gradient(#333, #333) center / 5px 1px no-repeat #f4f4f4;
}
.toggle::after {
    content: "";
    position: absolute;
    left: 9px;
    top: 3px;
    width: 5px;
    border-top: 1px dotted #333;
}
.folder {
    width: 16px;
    height: 14px;
    margin-right: 4px;
}
.tree ul {
    list-style: none;
    margin: 0;
    padding: 0;
}
.tree li {
    position: relative;
    display: flex;
    align-items: center;
    height: 23px;
    padding-left: 44px;
}
.tree li::before {
    content: "";
    position: absolute;
    left: 30px;
    top: 0;
    width: 10px;
    height: 11px;
    border: 1px dotted #333;
    border-width: 0 0 1px 1px;
}
.tree li:not(:last-child)::after {
    content: "";
    position: absolute;
    left: 30px;
    top: 11px;
    height: 12px;
    border-left: 1px dotted #333;
}
.tree li svg {
    flex: none;
    width: 18px;
    height: 18px;
    margin-right: 5px;
}
.scrollbar {
    flex: none;
    display: flex;
    align-items: center;
    gap: 6px;
    height: 22px;
    padding: 1px 7px;
    border-top: 1px solid #dde4ee;
    border-bottom: 1px solid #8099c4;
    background: #f1f3f6;
}
.arrow {
    border: 5px solid transparent;
}
.arrow-left {
    border-right-color: #404040;
    border-left: none;
}
.arrow-right {
    border-left-color: #404040;
    border-right: none;
    margin-left: auto;
}
.thumb {
    width: 198px;
    height: 19px;
    border: 1px solid #868d98;
    border-radius: 2px;
    background:
        repeating-linear-gradient(90deg, #5e6672 0 1px, transparent 1px 2px) center / 8px 9px no-repeat,
        linear-gradient(#f0f2f5, #e4e7ee 80%, #d3d8e2);
}
.splitter {
    flex: none;
    display: flex;
    flex-direction: column;
    align-items: center;
    justify-content: center;
    gap: 8px;
    width: 10px;
    background: linear-gradient(90deg, #e6eefa, #8fabd2);
}
.split-arrow {
    border: 4px solid transparent;
    border-left: none;
    border-right-color: #1f3f80;
}
.split-dots {
    width: 2px;
    height: 34px;
    background: repeating-linear-gradient(#1f3f80 0 2px, transparent 2px 4px);
}
.canvas {
    flex: 1;
    display: flex;
    align-items: center;
    justify-content: center;
    padding-left: 96px;
    background: #a2adb5;
}

/* diagram */
.diagram {
    flex: none;
    font-family: "Liberation Sans", Arial, sans-serif;
}
.lanes {
    stroke: #787878;
}
.lane-title {
    font-size: 11px;
    text-anchor: middle;
    fill: #111;
}
.task-text {
    font-size: 11px;
    font-weight: bold;
    text-anchor: middle;
    fill: #2653a8;
}
.flow {
    fill: none;
    stroke: #333;
}
.flow path {
    marker-end: url(#head);
}
.flow-text {
    font-size: 13px;
    fill: #000;
}
```
